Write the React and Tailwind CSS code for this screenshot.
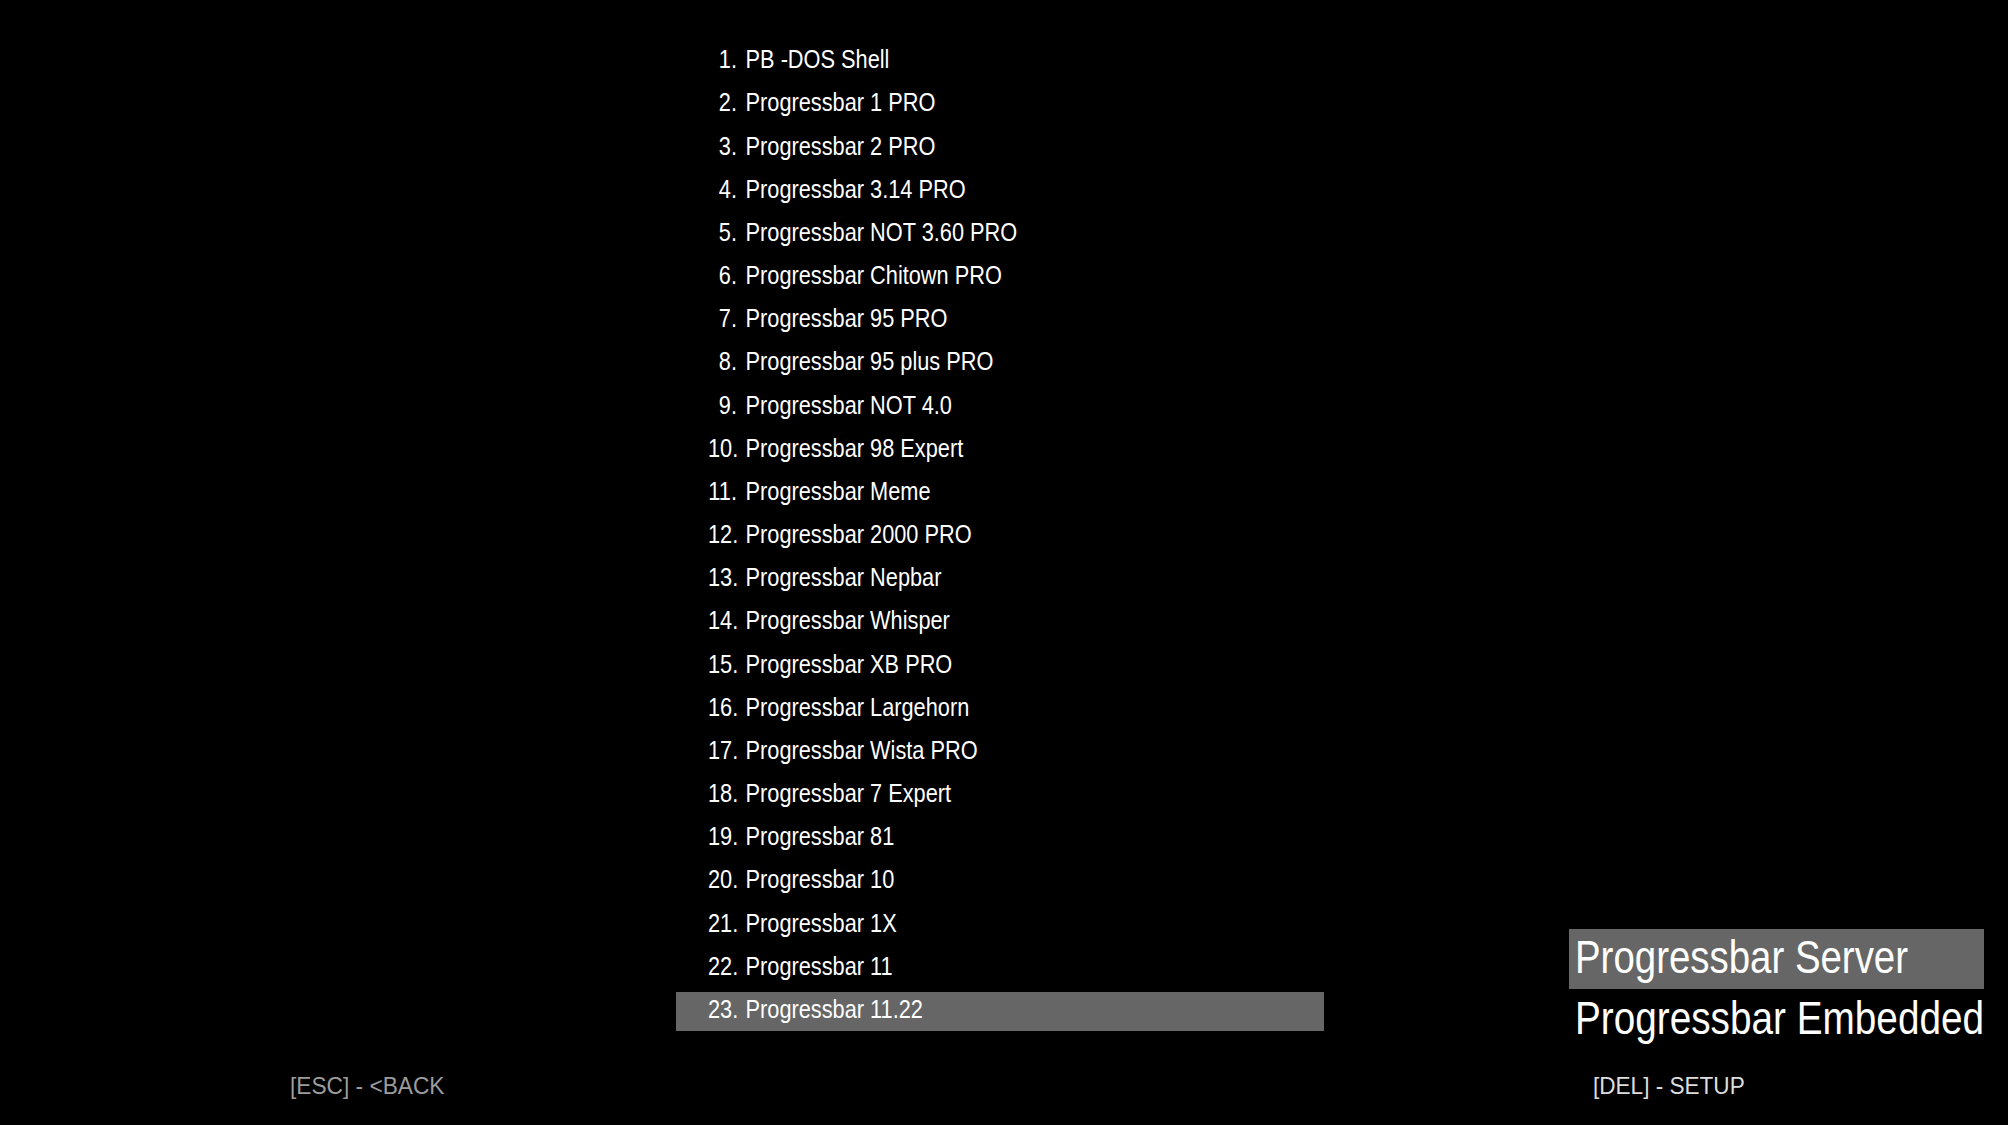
import React from "react";

const items = [
  "PB -DOS Shell",
  "Progressbar 1 PRO",
  "Progressbar 2 PRO",
  "Progressbar 3.14 PRO",
  "Progressbar NOT 3.60 PRO",
  "Progressbar Chitown PRO",
  "Progressbar 95 PRO",
  "Progressbar 95 plus PRO",
  "Progressbar NOT 4.0",
  "Progressbar 98 Expert",
  "Progressbar Meme",
  "Progressbar 2000 PRO",
  "Progressbar Nepbar",
  "Progressbar Whisper",
  "Progressbar XB PRO",
  "Progressbar Largehorn",
  "Progressbar Wista PRO",
  "Progressbar 7 Expert",
  "Progressbar 81",
  "Progressbar 10",
  "Progressbar 1X",
  "Progressbar 11",
  "Progressbar 11.22",
];

function Row({ n, label, selected }) {
  return (
    <div className="h-[43.18px] flex items-end">
      <div
        className={
          "h-[39px] w-[648px] flex items-center pl-[32px] pb-[4px] " +
          (selected ? "bg-[#666666]" : "")
        }
      >
        <span className="inline-flex items-center whitespace-nowrap origin-left scale-x-[0.87] text-[25px] leading-none text-white">
          <span className="w-[33.3px] text-right">{n}.</span>
          <span className="pl-[9.9px]">{label}</span>
        </span>
      </div>
    </div>
  );
}

export default function App() {
  return (
    <div className="w-full h-[1125px] bg-black overflow-hidden font-['Liberation_Sans',Arial,sans-serif]">
      <div className="flex items-start">
        <div className="ml-[676px] mt-[38px] flex flex-col">
          {items.map((label, i) => (
            <Row key={i} n={i + 1} label={label} selected={i === items.length - 1} />
          ))}
        </div>
        <div className="ml-auto mr-[24px] mt-[929px] w-[415px] flex flex-col">
          <div className="h-[60px] bg-[#666666] flex items-center pl-[6px] pb-[4px]">
            <span className="inline-block whitespace-nowrap origin-left scale-x-[0.835] text-[46px] leading-none text-white">
              Progressbar Server
            </span>
          </div>
          <div className="h-[60px] flex items-center pl-[6px] pb-[3px]">
            <span className="inline-block whitespace-nowrap origin-left scale-x-[0.842] text-[46px] leading-none text-white">
              Progressbar Embedded
            </span>
          </div>
        </div>
      </div>
      <div className="mt-[23px] h-[30px] flex items-center">
        <div className="w-[1593px] pl-[290px]">
          <span className="inline-block whitespace-nowrap origin-left scale-x-[0.945] text-[24px] leading-none text-[#9c9c9c]">
            [ESC] - &lt;BACK
          </span>
        </div>
        <div>
          <span className="inline-block whitespace-nowrap origin-left scale-x-[0.94] text-[24px] leading-none text-[#dedede]">
            [DEL] - SETUP
          </span>
        </div>
      </div>
    </div>
  );
}
